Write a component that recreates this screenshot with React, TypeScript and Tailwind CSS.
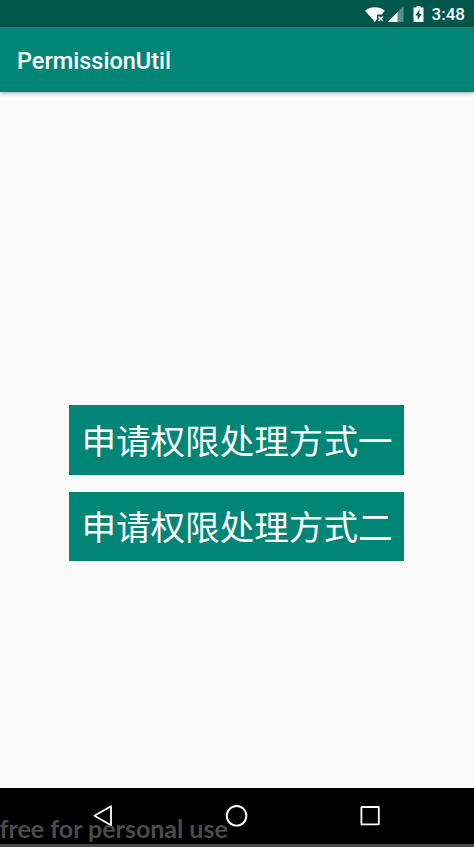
import React from 'react';

const methods = ['申请权限处理方式一', '申请权限处理方式二'];

const StatusBar: React.FC = () => (
  <div className="flex h-[27px] shrink-0 items-center justify-end bg-[#00574b] pr-[9px] text-white">
    {/* Wifi without a connection */}
    <svg className="h-[18px] w-[22px]" viewBox="0 0 22 18" fill="none">
      <path d="M1 5.7C6.8 1.1 15.2 1.1 20.8 5.7L17.6 9.6H13V14.3L10.9 17Z" fill="#fff" />
      <path d="M14.5 11.5L18.9 16.1M18.9 11.5L14.5 16.1" stroke="#fff" strokeWidth="1.5" />
    </svg>
    <svg className="ml-px mr-px h-[18px] w-[17px]" viewBox="0 0 17 18">
      <path d="M16.5 1.2V17H0.7Z" fill="#fff" fillOpacity="0.35" />
      <path d="M10.5 7.2V17H0.7Z" fill="#fff" />
    </svg>
    <svg className="ml-[8px] h-[18px] w-[11px]" viewBox="0 0 11 18">
      <path d="M3.5 1H7.5V2.5H10.5V17H0.5V2.5H3.5Z" fill="#fff" />
      <path d="M6.4 4.6L2.4 10.4H4.7V15L8.7 9.1H6.4Z" fill="#00574b" />
    </svg>
    <span className="ml-[8px] pt-px text-[17px] font-medium leading-[20px]">3:48</span>
  </div>
);

const NavigationBar: React.FC = () => (
  <div className="relative h-[59px] shrink-0 border-b-[3px] border-[#4a484a] bg-black">
    <div className="flex h-full items-center justify-between pl-[92px] pr-[93px]">
      <svg className="h-[24px] w-[22px]" viewBox="0 0 22 24" fill="none">
        <path d="M19 2.2V21.2L2.5 11.7Z" stroke="#fff" strokeWidth="1.8" strokeLinejoin="round" />
      </svg>
      <svg className="h-[24px] w-[24px]" viewBox="0 0 24 24" fill="none">
        <circle cx="11.6" cy="11.8" r="9.8" stroke="#fff" strokeWidth="1.9" />
      </svg>
      <svg className="h-[24px] w-[22px]" viewBox="0 0 22 24" fill="none">
        <rect x="2.4" y="3" width="17.4" height="17.4" rx="0.5" stroke="#fff" strokeWidth="1.8" />
      </svg>
    </div>
    <span className="absolute left-[-0.5px] top-[25px] whitespace-nowrap font-['Lato',sans-serif] text-[25px] font-bold leading-[30px] text-[#777]/65">
      free for personal use
    </span>
  </div>
);

const App: React.FC = () => {
  return (
    <div className="flex h-[847px] w-full flex-col overflow-hidden bg-[#fafafa] font-['Roboto','Noto_Sans_CJK_SC',sans-serif]">
      <StatusBar />

      <header className="flex h-[65px] shrink-0 items-center bg-[#008577] pl-[17px] pt-[5px] shadow-[0_1px_4px_rgba(0,0,0,0.35)]">
        <h1 className="text-[23.5px] font-medium text-white">PermissionUtil</h1>
      </header>

      <main className="flex flex-1 flex-col items-center pr-px pt-[313px]">
        {methods.map((label) => (
          <button
            key={label}
            className="mb-[17px] flex h-[69.5px] w-[335px] items-center justify-center whitespace-nowrap bg-[#008577] pl-px pt-[5px] text-[34.6px] leading-none text-white"
          >
            {label}
          </button>
        ))}
      </main>

      <NavigationBar />
    </div>
  );
};

export default App;
